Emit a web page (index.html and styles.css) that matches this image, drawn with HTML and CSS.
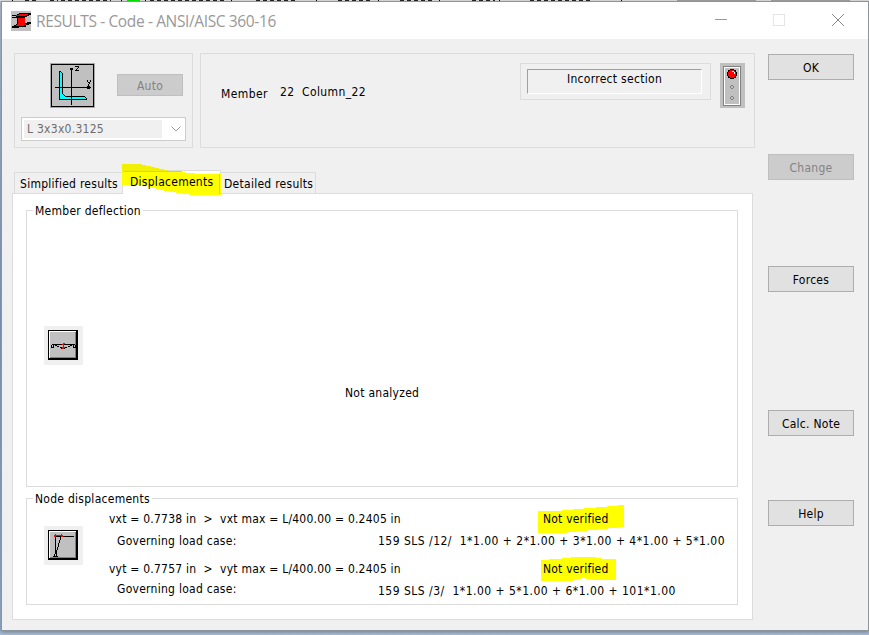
FILE: index.html
```html
<!DOCTYPE html>
<html lang="en">
<head>
    <meta charset="UTF-8">
    <meta name="viewport" content="width=device-width, initial-scale=1.0">
    <title>RESULTS - Code - ANSI/AISC 360-16</title>
    <link rel="stylesheet" href="styles.css">
</head>
<body>
    <div class="backdrop">
        <svg width="869" height="1" viewBox="0 0 869 1" shape-rendering="crispEdges">
            <path d="M25 .5 H38 M50 .5 H58 M61 .5 H111 M150 .5 H224 M256 .5 H295 M338 .5 H372 M400 .5 H434 M472 .5 H495 M530 .5 H593" stroke="#222" stroke-dasharray="4 3" fill="none"/>
            <path d="M12 .5 H13 M121 .5 H122 M145 .5 H146 M231 .5 H232 M316 .5 H317 M378 .5 H379 M439 .5 H440 M499 .5 H500 M621 .5 H622" stroke="#000" fill="none"/>
            <path d="M127 .5 H140" stroke="#0d0" fill="none"/>
            <path d="M677 .5 H756 M771 .5 H850" stroke="#999" fill="none"/>
        </svg>
    </div>

    <div class="window">
        <div class="titlebar">
            <svg class="app-icon" width="20" height="20" viewBox="0 0 20 20" shape-rendering="crispEdges">
                <rect width="20" height="20" fill="#c0c0c0"/>
                <path d="M1 4 H6 V3 H8 V2 H20 V4 H18 V5 H16 V6 H14 V12 H16 V11 H20 V13 H18 V14 H15 V16 H8 V17 H1 V15 H3 V14 H5 V13 H6 V7 H1 Z" fill="#000"/>
                <path d="M8 3 H17 V4 H15 V5 H5 V4 H8 Z M7 7 H14 V13 H15 V14 H13 V15 H5 V14 H6 V13 H7 Z" fill="#f00"/>
                <path d="M1 5 H5 V6 H1 Z" fill="#c0c0c0"/>
            </svg>
            <span class="title">RESULTS - Code - ANSI/AISC 360-16</span>
            <svg class="controls" width="124" height="14" viewBox="0 0 124 14" shape-rendering="crispEdges">
                <path d="M0 6.5 H12" stroke="#999" fill="none"/>
                <rect x="58.5" y="1.5" width="11" height="11" stroke="#e5e5e5" fill="none"/>
                <path d="M117 1 L129 13 M129 1 L117 13" stroke="#888" fill="none" shape-rendering="auto"/>
            </svg>
        </div>

        <div class="client">
            <div class="main">
                <div class="top">
                    <div class="box section-box">
                        <div class="section-row">
                            <svg class="section-icon" width="45" height="45" viewBox="0 0 45 45" shape-rendering="crispEdges">
                                <rect width="45" height="45" fill="#a8a8a8"/>
                                <rect x="1.5" y="1.5" width="42" height="42" fill="#c0c0c0" stroke="#000"/>
                                <path d="M9.5 8.5 H10.5 L12.5 10.5 V30.5 L15.5 33.5 H34.5 L36.5 35.5 V36.5 H9.5 Z" fill="#0ff" stroke="#000"/>
                                <path d="M21.5 5 V42 M5 24.5 H41" stroke="#000" fill="none"/>
                                <path d="M20 5 H23 V7 H20 Z M37 23 H40 V26 H37 Z" fill="#000"/>
                                <path d="M25 3.5 H29 M28.5 4 V5 M27.5 5 V6 M26.5 6 V7 M25 7.5 H29" stroke="#000" fill="none"/>
                                <path d="M37.5 17 V19 M40.5 17 V19 M38 19.5 H40 M39 20 V21 M38.5 21 V23" stroke="#000" fill="none"/>
                            </svg>
                            <button class="btn auto" disabled>Auto</button>
                        </div>
                        <div class="select">
                            <span class="select-text">L 3x3x0.3125</span>
                            <svg width="10" height="6" viewBox="0 0 10 6"><path d="M0.5 0.5 L5 5 L9.5 0.5" stroke="#999" fill="none"/></svg>
                        </div>
                    </div>
                    <div class="box member-box">
                        <span class="member-label">Member</span>
                        <span class="member-no">22</span>
                        <span class="member-name">Column_22</span>
                        <div class="status-frame"><div class="status">Incorrect section</div></div>
                        <svg class="light" width="25" height="45" viewBox="0 0 25 45" shape-rendering="crispEdges">
                            <rect width="25" height="45" fill="#c0c0c0"/>
                            <rect x="3.5" y="3.5" width="17" height="39" fill="none" stroke="#808080"/>
                            <rect x="4.5" y="4.5" width="15" height="37" fill="none" stroke="#fff"/>
                            <path d="M10 6 H14 V7 H16 V9 H17 V13 H16 V15 H14 V16 H10 V15 H8 V13 H7 V9 H8 V7 H10 Z" fill="#000"/>
                            <path d="M10 7 H14 V8 H15 V9 H16 V13 H15 V14 H14 V15 H10 V14 H9 V13 H8 V9 H9 V8 H10 Z" fill="#f00"/>
                            <path d="M12 8 H14 V9 H15 V11 H14 V9 H12 Z" fill="#fff"/>
                            <path d="M11 22.5 H13 M11 25.5 H13 M10.5 23 V25 M13.5 23 V25 M11 33.5 H13 M11 36.5 H13 M10.5 34 V36 M13.5 34 V36" stroke="#808080" fill="none"/>
                        </svg>
                    </div>
                </div>

                <div class="tabs">
                    <div class="tab tab-first">Simplified results</div>
                    <div class="tab active">
                        <svg class="marker" width="99" height="31" viewBox="0 0 99 31" shape-rendering="crispEdges">
                            <path d="M0 0 H18 L48 7 L78 10 H99 V31 H70 L44 27 L20 21 H0 Z" fill="#ff0"/>
                            <path d="M0 0 H18 L48 7 H0 Z" fill="#f0f000"/>
                            <path d="M97.5 10 V30 M0.5 7.5 H60" stroke="#dcdc00" fill="none"/>
                        </svg>
                        <span class="tab-text">Displacements</span>
                    </div>
                    <div class="tab tab-last">Detailed results</div>
                </div>

                <div class="panel">
                    <div class="group deflection">
                        <div class="legend"><span>Member deflection</span></div>
                        <div class="icon-frame">
                            <svg width="30" height="30" viewBox="0 0 30 30" shape-rendering="crispEdges">
                                <rect width="30" height="30" fill="#000"/>
                                <path d="M1 1 H28 V28 H1 Z" fill="#808080"/>
                                <path d="M1 1 H28 L26 3 H3 V26 L1 28 Z" fill="#fff"/>
                                <rect x="2" y="2" width="25" height="25" fill="#c0c0c0"/>
                                <path d="M4 14.5 H27 M3.5 15 V18 M4 17.5 H6 M5.5 15 V17 M27.5 15 V18 M25 17.5 H27 M25.5 15 V17 M7 15.5 H9 M9 16.5 H11 M12 17.5 H14 M17 17.5 H19 M20 16.5 H22 M22 15.5 H24 M13 18.5 H17" stroke="#000" fill="none"/>
                                <path d="M15.5 13 V19 M14 14.5 H15 M16 13.5 H17 M14 18.5 H16 M14 17.5 H17" stroke="#f00" fill="none"/>
                            </svg>
                        </div>
                        <div class="not-analyzed">Not analyzed</div>
                    </div>

                    <div class="group nodes">
                        <div class="legend"><span>Node displacements</span></div>
                        <div class="icon-frame">
                            <svg width="30" height="30" viewBox="0 0 30 30" shape-rendering="crispEdges">
                                <rect width="30" height="30" fill="#000"/>
                                <path d="M1 1 H28 V28 H1 Z" fill="#808080"/>
                                <path d="M1 1 H28 L26 3 H3 V26 L1 28 Z" fill="#fff"/>
                                <rect x="2" y="2" width="25" height="25" fill="#c0c0c0"/>
                                <path d="M7.5 6 V24 M7 6.5 H26 M5 26.5 H10 M6.5 24 V26 M8.5 24 V26 M12.5 7 V10 M11.5 10 V13 M10.5 13 V17 M9.5 17 V20 M8.5 20 V24" stroke="#000" fill="none"/>
                                <path d="M6 5.5 H15 M7.5 4 V7 M13.5 4 V7 M6.5 6 V7 M14.5 6 V7" stroke="#f00" fill="none"/>
                            </svg>
                        </div>
                        <div class="rows">
                            <div class="row">
                                <span class="formula">vxt = 0.7738 in  &gt;  vxt max = L/400.00 = 0.2405 in</span>
                                <span class="verdict">
                                    <svg class="marker mark-x" width="86" height="28" viewBox="0 0 86 28" shape-rendering="crispEdges"><path d="M0 6 H18 L86 0 V22 L24 28 H0 Z" fill="#ff0"/></svg>
                                    <span class="verdict-text">Not verified</span>
                                </span>
                            </div>
                            <div class="row case">
                                <span class="case-label">Governing load case:</span>
                                <span class="case-value">159 SLS /12/  1*1.00 + 2*1.00 + 3*1.00 + 4*1.00 + 5*1.00</span>
                            </div>
                            <div class="row second">
                                <span class="formula">vyt = 0.7757 in  &gt;  vyt max = L/400.00 = 0.2405 in</span>
                                <span class="verdict">
                                    <svg class="marker mark-y" width="75" height="24" viewBox="0 0 75 24" shape-rendering="crispEdges"><path d="M0 3 L16 2 L34 0 H52 L64 2 H75 V23 H55 L42 21 L30 24 H0 Z" fill="#ff0"/></svg>
                                    <span class="verdict-text">Not verified</span>
                                </span>
                            </div>
                            <div class="row case last">
                                <span class="case-label">Governing load case:</span>
                                <span class="case-value">159 SLS /3/  1*1.00 + 5*1.00 + 6*1.00 + 101*1.00</span>
                            </div>
                        </div>
                    </div>
                </div>
            </div>

            <div class="side">
                <button class="btn ok">OK</button>
                <button class="btn change" disabled>Change</button>
                <button class="btn forces">Forces</button>
                <button class="btn calc">Calc. Note</button>
                <button class="btn help">Help</button>
            </div>
        </div>
    </div>
</body>
</html>
```
FILE: styles.css
```css
* {
    box-sizing: border-box;
}

body {
    margin: 0;
    width: 869px;
    height: 635px;
    overflow: hidden;
    font-family: Tahoma, "DejaVu Sans Condensed", "DejaVu Sans", sans-serif;
    font-stretch: condensed;
    font-size: 12px;
    line-height: 16px;
    letter-spacing: 0.27px;
    color: #000;
    background: linear-gradient(to bottom, #b5c3d3 0, #86a0c4 320px, #9cb4d0 630px, #a9bdd5 635px);
}

/* Strip of the table behind the dialog */
.backdrop {
    height: 1px;
    overflow: hidden;
    background-color: #e3e3e3;
}

.backdrop svg {
    display: block;
}

.window {
    width: 868px;
    height: 630px;
    margin-left: 1px;
    border: 1px solid #8c959c;
    background-color: #f0f0f0;
    box-shadow: 0 1px 4px rgba(0, 0, 0, 0.3);
}

.titlebar {
    display: flex;
    align-items: center;
    height: 37px;
    padding-left: 9px;
    background-color: #fff;
}

.title {
    margin-left: 5px;
    font-family: "Segoe UI", "Open Sans", "Noto Sans", sans-serif;
    font-stretch: normal;
    font-size: 15.5px;
    letter-spacing: -0.37px;
    color: #999;
}

.controls {
    margin-left: auto;
    margin-right: 29px;
    margin-top: -2px;
    overflow: visible;
}

.client {
    display: flex;
    height: 591px;
}

.main {
    width: 753px;
    padding-left: 10px;
    padding-top: 14px;
}

.top {
    display: flex;
    gap: 7px;
    padding-left: 2px;
    height: 95px;
}

.box {
    border: 1px solid #dcdcdc;
}

.section-box {
    flex: none;
    width: 179px;
    padding: 9px 6px 0;
}

.section-row {
    display: flex;
    align-items: center;
    gap: 22px;
    padding-left: 29px;
}

.section-icon {
    flex: none;
}

.btn {
    display: block;
    width: 86px;
    height: 26px;
    padding: 2px 0 0;
    border: 1px solid #adadad;
    background-color: #e1e1e1;
    font: inherit;
    letter-spacing: inherit;
    color: #000;
}

.btn:disabled {
    border-color: #bfbfbf;
    background-color: #ccc;
    color: #838383;
}

.btn.auto {
    width: 66px;
    height: 22px;
    margin-top: -1px;
}

.select {
    display: flex;
    align-items: center;
    width: 165px;
    height: 24px;
    margin-top: 9px;
    padding: 0 4px 0 2px;
    border: 1px solid #ccc;
    background-color: #fff;
}

.select-text {
    width: 138px;
    height: 18px;
    margin-right: 9px;
    padding: 1px 0 0 3px;
    background-color: #f0f0f0;
    color: #6d6d6d;
}

.member-box {
    flex: none;
    display: flex;
    align-items: flex-start;
    width: 555px;
    padding: 9px 0 0 20px;
    letter-spacing: 0.4px;
}

.member-label {
    width: 59px;
    padding-top: 23px;
}

.member-no {
    width: 22px;
    padding-top: 21px;
}

.member-name {
    width: 218px;
    padding-top: 21px;
}

.status-frame {
    width: 191px;
    height: 37px;
    margin-right: 9px;
    padding: 5px 8px 0 6px;
    border: 1px solid #dcdcdc;
    letter-spacing: 0.3px;
}

.status {
    height: 25px;
    border: 1px solid;
    border-color: #a0a0a0 #fff #fff #a0a0a0;
    text-align: center;
    padding-top: 1px;
}

.tabs {
    display: flex;
    align-items: flex-end;
    height: 45px;
    padding-left: 2px;
}

.tab {
    height: 21px;
    border: 1px solid #dcdcdc;
    border-bottom: none;
    padding-top: 3px;
    white-space: nowrap;
}

.tab-first {
    width: 108px;
    border-right: none;
    padding-left: 5px;
}

.tab-last {
    width: 95px;
    border-left: none;
    padding-left: 3px;
}

.active {
    position: relative;
    width: 99px;
    height: 24px;
    margin-bottom: -1px;
    background-color: #fff;
    padding-left: 7px;
}

.marker {
    position: absolute;
    left: -1px;
    top: -7px;
}

.tab-text,
.verdict-text {
    position: relative;
}

.panel {
    width: 741px;
    height: 427px;
    padding: 16px 14px 0 13px;
    border: 1px solid #dcdcdc;
    background-color: #fff;
}

.group {
    width: 712px;
    border: 1px solid #dcdcdc;
}

.legend {
    height: 16px;
    margin-top: -8px;
    padding-left: 6px;
}

.legend span {
    display: inline-block;
    padding: 0 2px;
    background-color: #fff;
}

.deflection {
    height: 277px;
}

.icon-frame {
    width: 39px;
    height: 39px;
    padding: 4px;
    background-color: #f0f0f0;
}

.icon-frame svg {
    display: block;
}

.deflection .icon-frame {
    margin: 107px 0 0 17px;
}

.not-analyzed {
    margin: 20px 0 0 318px;
}

.nodes {
    display: grid;
    grid-template-columns: 82px 1fr;
    grid-template-rows: 8px 1fr;
    height: 107px;
    margin-top: 11px;
}

.nodes .legend {
    grid-column: 1 / 3;
}

.nodes .icon-frame {
    margin: 19px 0 0 17px;
}

.rows {
    padding-top: 4px;
}

.row {
    display: flex;
    height: 22px;
}

.formula {
    width: 434px;
    white-space: pre;
    letter-spacing: 0.22px;
}

.verdict {
    position: relative;
    letter-spacing: 0.2px;
}

.mark-x {
    left: -5px;
    top: -6px;
}

.mark-y {
    left: -2px;
    top: -4px;
}

.case {
    height: 28px;
    padding-left: 8px;
}

.case-label {
    width: 261px;
}

.case-value {
    white-space: pre;
    letter-spacing: 0.48px;
}

.second {
    height: 20px;
}

.last {
    height: 18px;
}

.last .case-value {
    padding-top: 2px;
}

.side {
    padding: 15px 0 0 13px;
}

.change { margin-top: 74px; }
.forces { margin-top: 86px; }
.calc { margin-top: 118px; }
.help { margin-top: 64px; }
```
